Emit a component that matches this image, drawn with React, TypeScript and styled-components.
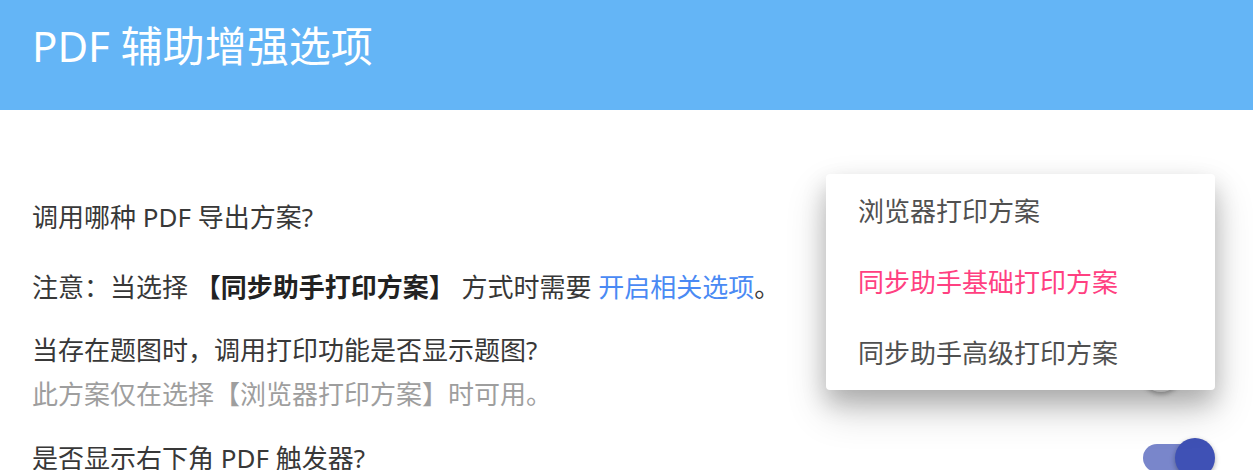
import React, { useState } from 'react'
import styled, { createGlobalStyle } from 'styled-components'

const GlobalStyle = createGlobalStyle`
  html, body {
    margin: 0;
    padding: 0;
    background: #fff;
    overflow: hidden;
  }
  body {
    font-family: "Noto Sans", "Noto Sans CJK SC", sans-serif;
    -webkit-font-smoothing: antialiased;
  }
`

const Page = styled.div`
  position: relative;
  width: 1253px;
  height: 470px;
  overflow: hidden;
`

const Header = styled.header`
  height: 110px;
  background: #64b5f6;
  padding: 0 32px;
  box-sizing: border-box;
`

const Title = styled.h1`
  margin: 0;
  font-size: 42px;
  font-weight: 400;
  line-height: 92px;
  color: #fff;
`

const Content = styled.div`
  display: flex;
  flex-direction: column;
  padding: 59px 32px 0;
`

const Row = styled.div<{ $height?: number; $top?: number }>`
  display: flex;
  align-items: center;
  justify-content: space-between;
  min-height: ${({ $height }) => ($height ? `${$height}px` : 'auto')};
  margin-top: ${({ $top }) => $top || 0}px;
`

const Texts = styled.div`
  display: flex;
  flex-direction: column;
`

const Label = styled.div<{ $hint?: boolean }>`
  font-size: 26px;
  line-height: 44px;
  color: ${({ $hint }) => ($hint ? '#9e9e9e' : '#383838')};
  white-space: nowrap;
`

const Strong = styled.b`
  font-weight: 700;
  color: #222;
`

const Link = styled.a`
  color: #4a8af4;
  text-decoration: none;
  cursor: pointer;
`

const SelectField = styled.div`
  width: 380px;
  height: 56px;
  margin-right: 6px;
  border-bottom: 2px solid #e0e0e0;
`

const SwitchBox = styled.div`
  position: relative;
  width: 72px;
  height: 40px;
  margin-right: 6px;
  cursor: pointer;
`

const Track = styled.div<{ $on: boolean }>`
  position: absolute;
  left: 0;
  top: 6px;
  width: 68px;
  height: 28px;
  border-radius: 14px;
  background: ${({ $on }) => ($on ? '#7986cb' : '#bdbdbd')};
`

const Thumb = styled.div<{ $on: boolean }>`
  position: absolute;
  top: 0;
  left: ${({ $on }) => ($on ? '32px' : '-2px')};
  width: 40px;
  height: 40px;
  border-radius: 50%;
  background: ${({ $on }) => ($on ? '#3f51b5' : '#f5f5f5')};
  box-shadow: 0 2px 6px rgba(0, 0, 0, 0.14), 0 2px 4px rgba(0, 0, 0, 0.2);
`

const Menu = styled.ul`
  position: absolute;
  top: 174px;
  right: 38px;
  width: 389px;
  height: 216px;
  margin: 0;
  padding: 2px 0 0;
  list-style: none;
  background: #fff;
  border-radius: 4px;
  box-shadow: 0 20px 40px rgba(0, 0, 0, 0.19), 0 12px 24px rgba(0, 0, 0, 0.2);
  box-sizing: border-box;
`

const MenuItem = styled.li<{ $active?: boolean }>`
  height: 71px;
  padding: 0 32px;
  font-size: 26px;
  line-height: 71px;
  color: ${({ $active }) => ($active ? '#ff4081' : '#505050')};
  cursor: pointer;
  white-space: nowrap;
`

const Switch: React.FC<{ on: boolean; onToggle: () => void }> = ({ on, onToggle }) => (
  <SwitchBox onClick={onToggle}>
    <Track $on={on} />
    <Thumb $on={on} />
  </SwitchBox>
)

const options = ['浏览器打印方案', '同步助手基础打印方案', '同步助手高级打印方案']

const App: React.FC = () => {
  const [scheme, setScheme] = useState<number>(1)
  const [showTitleImg, setShowTitleImg] = useState<boolean>(false)
  const [showTrigger, setShowTrigger] = useState<boolean>(true)

  return (
    <>
      <GlobalStyle />
      <Page>
        <Header>
          <Title>PDF 辅助增强选项</Title>
        </Header>
        <Content>
          <Row $height={96}>
            <Label>调用哪种 PDF 导出方案?</Label>
            {/* select field sits under the open menu */}
            <SelectField />
          </Row>
          <Row $height={44}>
            <Label>
              注意：当选择 <Strong>【同步助手打印方案】</Strong> 方式时需要 <Link>开启相关选项</Link>。
            </Label>
          </Row>
          <Row $top={19}>
            <Texts>
              <Label>当存在题图时，调用打印功能是否显示题图?</Label>
              <Label $hint>此方案仅在选择【浏览器打印方案】时可用。</Label>
            </Texts>
            <Switch on={showTitleImg} onToggle={() => setShowTitleImg(!showTitleImg)} />
          </Row>
          <Row $height={60} $top={12}>
            <Label>是否显示右下角 PDF 触发器?</Label>
            <Switch on={showTrigger} onToggle={() => setShowTrigger(!showTrigger)} />
          </Row>
        </Content>
        <Menu>
          {options.map((o, i) => (
            <MenuItem key={o} $active={i === scheme} onClick={() => setScheme(i)}>
              {o}
            </MenuItem>
          ))}
        </Menu>
      </Page>
    </>
  )
}

export default App
